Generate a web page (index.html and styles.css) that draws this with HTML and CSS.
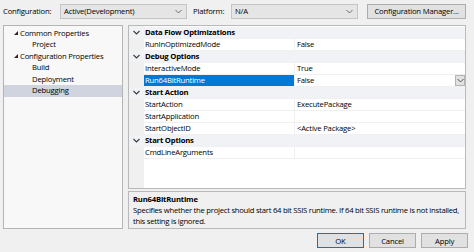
FILE: index.html
```html
<!DOCTYPE html>
<html lang="en">
<head>
    <meta charset="UTF-8">
    <title>Project Properties</title>
    <link rel="stylesheet" href="styles.css">
</head>
<body>
    <div class="dialog">
        <div class="toolbar">
            <span class="label label-config">Configuration:</span>
            <div class="combo">
                <span>Active(Development)</span>
                <svg class="chev" width="7" height="5" viewBox="0 0 7 5"><path d="M0.5 1 L3.5 4 L6.5 1" fill="none" stroke="#6d6d6d" stroke-width="1"/></svg>
            </div>
            <span class="label label-platform">Platform:</span>
            <div class="combo">
                <span>N/A</span>
                <svg class="chev" width="7" height="5" viewBox="0 0 7 5"><path d="M0.5 1 L3.5 4 L6.5 1" fill="none" stroke="#6d6d6d" stroke-width="1"/></svg>
            </div>
            <button class="btn btn-manager">Configuration Manager...</button>
        </div>

        <div class="main">
            <div class="tree">
                <div class="node top"><span class="tri"></span>Common Properties</div>
                <div class="node child">Project</div>
                <div class="node top"><span class="tri"></span>Configuration Properties</div>
                <div class="node child">Build</div>
                <div class="node child">Deployment</div>
                <div class="node child selected">Debugging</div>
            </div>

            <div class="right">
                <div class="grid">
                    <div class="row cat"><span class="margin"><svg width="7" height="5" viewBox="0 0 7 5"><path d="M0.5 1 L3.5 4 L6.5 1" fill="none" stroke="#3c3c3c" stroke-width="1.1"/></svg></span><span class="name">Data Flow Optimizations</span></div>
                    <div class="row"><span class="margin"></span><span class="name">RunInOptimizedMode</span><span class="value">False</span></div>
                    <div class="row cat"><span class="margin"><svg width="7" height="5" viewBox="0 0 7 5"><path d="M0.5 1 L3.5 4 L6.5 1" fill="none" stroke="#3c3c3c" stroke-width="1.1"/></svg></span><span class="name">Debug Options</span></div>
                    <div class="row"><span class="margin"></span><span class="name">InteractiveMode</span><span class="value">True</span></div>
                    <div class="row selected"><span class="margin"></span><span class="name">Run64BitRuntime</span><span class="value">False<span class="drop"><svg width="7" height="5" viewBox="0 0 7 5"><path d="M0.5 1 L3.5 4 L6.5 1" fill="none" stroke="#555" stroke-width="1"/></svg></span></span></div>
                    <div class="row cat"><span class="margin"><svg width="7" height="5" viewBox="0 0 7 5"><path d="M0.5 1 L3.5 4 L6.5 1" fill="none" stroke="#3c3c3c" stroke-width="1.1"/></svg></span><span class="name">Start Action</span></div>
                    <div class="row"><span class="margin"></span><span class="name">StartAction</span><span class="value">ExecutePackage</span></div>
                    <div class="row"><span class="margin"></span><span class="name">StartApplication</span><span class="value"></span></div>
                    <div class="row"><span class="margin"></span><span class="name">StartObjectID</span><span class="value">&lt;Active Package&gt;</span></div>
                    <div class="row cat"><span class="margin"><svg width="7" height="5" viewBox="0 0 7 5"><path d="M0.5 1 L3.5 4 L6.5 1" fill="none" stroke="#3c3c3c" stroke-width="1.1"/></svg></span><span class="name">Start Options</span></div>
                    <div class="row"><span class="margin"></span><span class="name">CmdLineArguments</span><span class="value"></span></div>
                </div>
                <div class="desc">
                    <div class="desc-title">Run64BitRuntime</div>
                    <div class="desc-text">Specifies whether the project should start 64 bit SSIS runtime. If 64 bit SSIS runtime is not installed, this setting is ignored.</div>
                </div>
            </div>
        </div>

        <div class="footer">
            <button class="btn btn-default">OK</button>
            <button class="btn">Cancel</button>
            <button class="btn">Apply</button>
        </div>
    </div>
</body>
</html>
```

FILE: styles.css
```css
body {
    margin: 0;
    background: #f0f0f0;
    font-family: 'Open Sans', sans-serif;
    font-size: 7.7px;
    letter-spacing: -0.2px;
    color: #000;
}

.dialog {
    width: 474px;
    height: 252px;
    overflow: hidden;
}

.toolbar {
    display: flex;
    align-items: center;
    height: 16px;
    padding: 3px 0 0 3px;
}

.label-config {
    width: 57px;
}

.label-platform {
    width: 38px;
    padding-left: 6px;
}

.combo {
    box-sizing: border-box;
    width: 127px;
    height: 15px;
    background: #e5e5e5;
    border: 1px solid #c4c4c4;
    display: flex;
    align-items: center;
    justify-content: space-between;
    padding: 0 4px 0 3px;
}

.btn {
    box-sizing: border-box;
    font-family: inherit;
    font-size: inherit;
    letter-spacing: inherit;
    color: #000;
    background: #e1e1e1;
    border: 1px solid #adadad;
    height: 15px;
    padding: 0;
}

.btn-manager {
    width: 99px;
    margin-left: 9px;
}

.main {
    display: flex;
    gap: 5px;
    margin-top: 6px;
    padding-left: 3px;
}

.tree {
    box-sizing: border-box;
    width: 120px;
    height: 204px;
    background: #f8f8f8;
    border: 1px solid #b4b4b4;
    padding-top: 1.5px;
}

.node {
    height: 11.5px;
    line-height: 11.5px;
    white-space: nowrap;
}

.node.top {
    padding-left: 10px;
}

.node.child {
    padding-left: 28px;
}

.node.selected {
    background: #cfd4df;
}

.tri {
    display: inline-block;
    width: 0;
    height: 0;
    border-left: 4px solid transparent;
    border-bottom: 4px solid #262626;
    margin-right: 2px;
    vertical-align: 0.5px;
}

.right {
    width: 338px;
    display: flex;
    flex-direction: column;
    gap: 2px;
}

.grid {
    box-sizing: border-box;
    height: 164px;
    background: #fff;
    border: 1px solid #b9b9b9;
    padding-top: 1px;
    background-image: linear-gradient(#f0f0f0, #f0f0f0);
    background-size: 15px 100%;
    background-repeat: no-repeat;
}

.row {
    display: flex;
    height: 12px;
    line-height: 11px;
    box-sizing: border-box;
    border-bottom: 1px solid #f0f0f0;
}

.row .margin {
    width: 15px;
    flex: none;
    display: flex;
    align-items: center;
    justify-content: center;
}

.row .name {
    width: 149px;
    flex: none;
    padding-left: 1px;
    border-right: 1px solid #f0f0f0;
}

.row .value {
    flex: 1;
    padding-left: 2px;
    display: flex;
    justify-content: space-between;
}

.row.cat {
    background: #f0f2f5;
    font-weight: bold;
}

.row.cat .name {
    border-right: none;
}

.row.selected .name {
    background: #0078d7;
    color: #fff;
}

.drop {
    box-sizing: border-box;
    width: 10px;
    height: 11px;
    background: #e1e1e1;
    border: 1px solid #b4b4b4;
    display: flex;
    align-items: center;
    justify-content: center;
}

.desc {
    box-sizing: border-box;
    height: 38px;
    border: 1px solid #b9b9b9;
    padding: 2px 1px 2px 4px;
    line-height: 10.8px;
}

.desc-text {
    letter-spacing: -0.26px;
}

.desc-title {
    font-weight: bold;
}

.footer {
    display: flex;
    justify-content: flex-end;
    gap: 5px;
    padding: 4px 6px 0 0;
}

.footer .btn {
    width: 47px;
    height: 15px;
}

.btn-default {
    border-color: #0078d7;
}
```
